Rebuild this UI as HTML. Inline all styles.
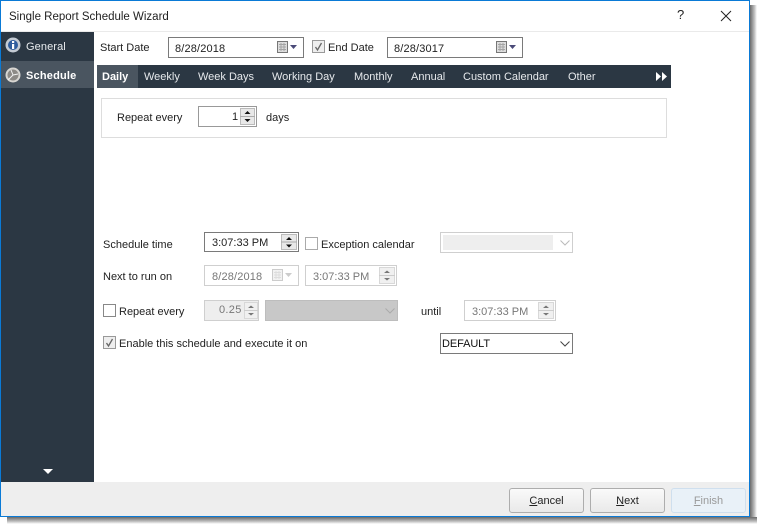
<!DOCTYPE html>
<html><head><meta charset="utf-8"><style>
html,body{margin:0;padding:0;background:#fff;width:765px;height:532px;overflow:hidden}
body{position:relative;font-family:"Liberation Sans",sans-serif;font-size:11px;color:#222}
.a{position:absolute;box-sizing:border-box}
.t{position:absolute;white-space:nowrap;line-height:14px;margin-top:1px}
.f{position:absolute;box-sizing:border-box;background:#fff;border:1px solid #7a7a7a}
.d{border:1px solid #cfcfcf;color:#777}
.cb{position:absolute;box-sizing:border-box;width:13px;height:13px;background:#fff;border:1px solid #8a8a8a}
.tab{position:absolute;top:70px;color:#e6e9ec;line-height:14px;white-space:nowrap}
.btn{position:absolute;top:488px;width:75px;height:25px;box-sizing:border-box;border:1px solid #adadad;border-radius:3px;background:linear-gradient(#fafafa,#e9e9e9);text-align:center;line-height:23px;padding-top:1px;color:#222}
svg{position:absolute;overflow:visible}
</style></head><body>
<!-- shadow -->
<div class="a" style="left:750px;top:5px;width:7px;height:517px;background:linear-gradient(90deg,#6a6a6a,#bbb 60%,#fff)"></div>
<div class="a" style="left:7px;top:517px;width:750px;height:7px;background:linear-gradient(#6a6a6a,#bbb 60%,#fff)"></div>
<!-- window -->
<div class="a" style="left:0;top:0;width:750px;height:517px;background:#fff;border:1px solid #0a7ad6"></div>
<div class="a" style="left:1px;top:31px;width:748px;height:1px;background:#eaeaea"></div>
<div class="t" style="left:9px;top:9px;color:#222;font-size:11.5px">Single Report Schedule Wizard</div>
<div class="t" style="left:677px;top:7px;font-size:13px">?</div>
<svg style="left:720px;top:10px" width="12" height="12"><path d="M1 1L11 11M11 1L1 11" stroke="#222" stroke-width="1" fill="none"/></svg>
<!-- sidebar -->
<div class="a" style="left:1px;top:32px;width:93px;height:450px;background:#2b3743"></div>
<div class="a" style="left:1px;top:61px;width:93px;height:27px;background:#4a5560"></div>
<svg style="left:5px;top:37px" width="16" height="16"><circle cx="8" cy="8" r="7.5" fill="#c3cad3"/><circle cx="8" cy="8" r="5" fill="#2f5d9e"/><rect x="7" y="7" width="2.2" height="5" fill="#fff"/><rect x="7" y="4" width="2.2" height="2" fill="#fff"/></svg>
<div class="t" style="left:26px;top:39px;color:#e8ebee;letter-spacing:.1px">General</div>
<svg style="left:5px;top:67px" width="16" height="16"><circle cx="8" cy="8" r="7.5" fill="#d8d6d2"/><circle cx="8" cy="8" r="5.5" fill="#8d8a86"/><path d="M8 8L3 13M8 8L13 7M8 8L6 3" stroke="#f2f2f2" stroke-width="1" fill="none"/></svg>
<div class="t" style="left:26px;top:68px;color:#fff;font-weight:bold;letter-spacing:.2px">Schedule</div>
<svg style="left:43px;top:469px" width="10" height="6"><path d="M0 0H10L5 5Z" fill="#fff"/></svg>
<!-- top date row -->
<div class="t" style="left:100px;top:40px">Start Date</div>
<div class="f" style="left:168px;top:37px;width:136px;height:21px"></div>
<div class="t" style="left:175px;top:41px;letter-spacing:.15px">8/28/2018</div>
<svg style="left:277px;top:41px" width="24" height="13"><rect x=".5" y=".5" width="10" height="11" fill="#ddd" stroke="#777"/><path d="M2 3.5H9M2 6H9M2 8.5H9M4 2V10M7 2V10" stroke="#a5a5a5" stroke-width="1"/><path d="M13 4H20L16.5 8Z" fill="#4a4a78"/></svg>
<div class="cb" style="left:312px;top:40px;border-color:#999;background:#eee"></div>
<svg style="left:312px;top:40px" width="13" height="13"><path d="M3.5 7L5.5 10L9.5 3" stroke="#666" stroke-width="1.3" fill="none"/></svg>
<div class="t" style="left:328px;top:40px">End Date</div>
<div class="f" style="left:387px;top:37px;width:136px;height:21px"></div>
<div class="t" style="left:394px;top:41px;letter-spacing:.15px">8/28/3017</div>
<svg style="left:496px;top:41px" width="24" height="13"><rect x=".5" y=".5" width="10" height="11" fill="#ddd" stroke="#777"/><path d="M2 3.5H9M2 6H9M2 8.5H9M4 2V10M7 2V10" stroke="#a5a5a5" stroke-width="1"/><path d="M13 4H20L16.5 8Z" fill="#4a4a78"/></svg>
<!-- tabs -->
<div class="a" style="left:97px;top:65px;width:574px;height:23px;background:#2b3743"></div>
<div class="a" style="left:97px;top:65px;width:41px;height:23px;background:#4a5560"></div>
<div class="tab" style="left:102px;color:#fff;font-weight:bold">Daily</div>
<div class="tab" style="left:144px">Weekly</div>
<div class="tab" style="left:198px">Week Days</div>
<div class="tab" style="left:272px">Working Day</div>
<div class="tab" style="left:354px">Monthly</div>
<div class="tab" style="left:411px">Annual</div>
<div class="tab" style="left:463px">Custom Calendar</div>
<div class="tab" style="left:568px">Other</div>
<svg style="left:656px;top:72px" width="11" height="9"><path d="M0 0L5 4.5L0 9ZM6 0L11 4.5L6 9Z" fill="#fff"/></svg>
<!-- group -->
<div class="a" style="left:101px;top:98px;width:566px;height:40px;border:1px solid #ddd"></div>
<div class="t" style="left:117px;top:110px">Repeat every</div>
<div class="f" style="left:198px;top:106px;width:59px;height:21px;border-color:#999"></div>
<div class="t" style="left:232px;top:109px">1</div>
<div class="a" style="left:240px;top:108px;width:15px;height:17px;background:#e8e8e8;border:1px solid #bbb"></div>
<svg style="left:240px;top:108px" width="15" height="17"><path d="M0 8.5H15" stroke="#aaa"/><path d="M4.5 6L7.5 3L10.5 6Z M4.5 11H10.5L7.5 14Z" fill="#111"/></svg>
<div class="t" style="left:266px;top:110px">days</div>
<!-- schedule time -->
<div class="t" style="left:103px;top:237px">Schedule time</div>
<div class="f" style="left:204px;top:232px;width:95px;height:20px"></div>
<div class="t" style="left:212px;top:235px">3:07:33 PM</div>
<div class="a" style="left:281px;top:234px;width:16px;height:16px;background:#e8e8e8;border:1px solid #bbb"></div>
<svg style="left:281px;top:234px" width="16" height="16"><path d="M0 8H16" stroke="#aaa"/><path d="M5 6L8 3L11 6Z M5 10.5H11L8 13.5Z" fill="#111"/></svg>
<div class="cb" style="left:305px;top:237px;border-color:#aaa"></div>
<div class="t" style="left:321px;top:237px">Exception calendar</div>
<div class="f d" style="left:440px;top:232px;width:133px;height:21px"></div>
<div class="a" style="left:443px;top:235px;width:110px;height:15px;background:#eeeeee"></div>
<svg style="left:560px;top:240px" width="10" height="6"><path d="M.5 .5L5 5L9.500 .5" stroke="#bbb" fill="none"/></svg>
<!-- next to run -->
<div class="t" style="left:103px;top:269px">Next to run on</div>
<div class="f d" style="left:204px;top:265px;width:95px;height:21px"></div>
<div class="t" style="left:212px;top:269px;color:#777;letter-spacing:.15px">8/28/2018</div>
<svg style="left:272px;top:269px" width="24" height="13"><rect x=".5" y=".5" width="10" height="11" fill="#f2f2f2" stroke="#ccc"/><path d="M2 3.500H9M2 6H9M2 8.5H9M4 2V10M7 2V10" stroke="#ddd"/><path d="M13 4H20L16.5 8Z" fill="#ccc"/></svg>
<div class="f d" style="left:305px;top:265px;width:92px;height:21px"></div>
<div class="t" style="left:313px;top:269px;color:#777">3:07:33 PM</div>
<div class="a" style="left:379px;top:267px;width:16px;height:17px;background:#f0f0f0;border:1px solid #d8d8d8"></div>
<svg style="left:379px;top:267px" width="16" height="17"><path d="M0 8.5H16" stroke="#ccc"/><path d="M5 6L8 3.500L11 6Z M5 11H11L8 13.500Z" fill="#777"/></svg>
<!-- repeat -->
<div class="cb" style="left:103px;top:304px;border-color:#888"></div>
<div class="t" style="left:119px;top:304px">Repeat every</div>
<div class="f d" style="left:204px;top:300px;width:55px;height:21px;background:#eee"></div>
<div class="t" style="left:219px;top:302px;color:#777;letter-spacing:.3px">0.25</div>
<div class="a" style="left:244px;top:302px;width:14px;height:17px;background:#f0f0f0;border:1px solid #d8d8d8"></div>
<svg style="left:244px;top:302px" width="14" height="17"><path d="M0 8.5H14" stroke="#ccc"/><path d="M4 6L7 3.500L10 6Z M4 11H10L7 13.500Z" fill="#777"/></svg>
<div class="a" style="left:265px;top:300px;width:133px;height:21px;background:#c8c8c8;border:1px solid #bdbdbd"></div>
<svg style="left:385px;top:308px" width="10" height="6"><path d="M.5 .5L5 5L9.500 .5" stroke="#aaa" fill="none"/></svg>
<div class="t" style="left:421px;top:304px">until</div>
<div class="f d" style="left:464px;top:300px;width:92px;height:21px"></div>
<div class="t" style="left:472px;top:304px;color:#777">3:07:33 PM</div>
<div class="a" style="left:538px;top:302px;width:16px;height:17px;background:#f0f0f0;border:1px solid #d8d8d8"></div>
<svg style="left:538px;top:302px" width="16" height="17"><path d="M0 8.5H16" stroke="#ccc"/><path d="M5 6L8 3.500L11 6Z M5 11H11L8 13.500Z" fill="#777"/></svg>
<!-- enable -->
<div class="cb" style="left:103px;top:336px;border-color:#999;background:#eee"></div>
<svg style="left:103px;top:336px" width="13" height="13"><path d="M3.500 7L5.500 10L9.500 3" stroke="#666" stroke-width="1.3" fill="none"/></svg>
<div class="t" style="left:119px;top:336px">Enable this schedule and execute it on</div>
<div class="f" style="left:440px;top:333px;width:133px;height:21px"></div>
<div class="t" style="left:442px;top:336px;color:#111;letter-spacing:-.1px">DEFAULT</div>
<svg style="left:560px;top:341px" width="10" height="6"><path d="M.5 .5L5 5L9.500 .5" stroke="#444" fill="none"/></svg>
<!-- footer -->
<div class="a" style="left:1px;top:482px;width:748px;height:34px;background:#eeeeee"></div>
<div class="btn" style="left:509px"><u>C</u>ancel</div>
<div class="btn" style="left:590px"><u>N</u>ext</div>
<div class="btn" style="left:671px;background:#e9f1f8;border-color:#cfdfee;color:#9a9a9a"><u>F</u>inish</div>
</body></html>
